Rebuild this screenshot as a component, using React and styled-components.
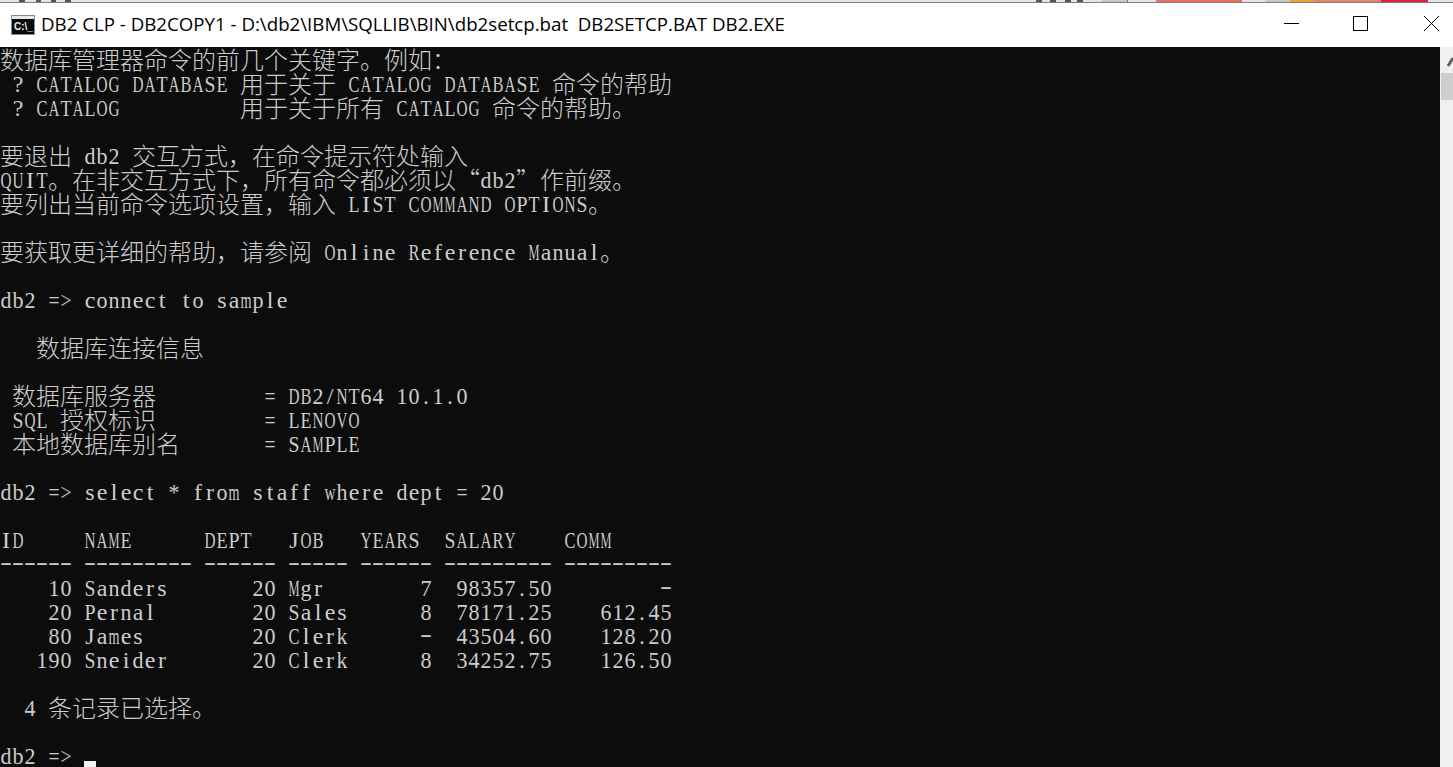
import React from 'react';
import styled, { createGlobalStyle } from 'styled-components';

const GlobalStyle = createGlobalStyle`
  html, body {
    margin: 0;
    padding: 0;
    height: 100%;
    overflow: hidden;
    background: #0c0c0c;
  }
`;

const Window = styled.div`
  display: flex;
  flex-direction: column;
  width: 1453px;
  height: 767px;
  overflow: hidden;
  background: #fff;
`;

const BehindStrip = styled.div`
  display: flex;
  height: 2px;
  background: #e4e4e4;
  border-bottom: 1px solid #808080;
`;

const BehindPiece = styled.div`
  width: ${(p) => p.$w}px;
  background: ${(p) => p.$c};
`;

const TitleBar = styled.div`
  display: flex;
  align-items: center;
  height: 44px;
  padding: 0 14px 0 11px;
  background: #fff;
`;

const TitleText = styled.div`
  flex: 1;
  margin-left: 6px;
  padding-bottom: 4px;
  font-family: 'Open Sans', 'Liberation Sans', sans-serif;
  font-size: 18.7px;
  color: #000;
  white-space: pre;
`;

const Controls = styled.div`
  display: flex;
  align-items: center;
  gap: 54px;
  padding-bottom: 3px;
`;

const ControlIcon = styled.svg`
  display: block;
  width: 15px;
  height: 15px;
  margin-left: ${(p) => (p.$close ? 2 : 0)}px;
`;

const Console = styled.div`
  display: flex;
  flex: 1;
  min-height: 0;
  background: #0c0c0c;
`;

const Screen = styled.div`
  flex: 1;
  overflow: hidden;
  color: #cccccc;
`;

const Row = styled.div`
  display: flex;
  height: 24px;
  line-height: 24px;
  white-space: pre;
`;

const Latin = styled.span`
  display: flex;
  font-family: 'Liberation Serif', serif;
  font-size: 24px;
  line-height: 26px;
`;

const Glyph = styled.span`
  display: flex;
  justify-content: center;
  width: 12px;
`;

const Cjk = styled.span`
  font-family: 'Noto Sans CJK SC', sans-serif;
  font-size: 24px;
  font-weight: 300;
`;

const Cursor = styled.span`
  align-self: flex-end;
  width: 12px;
  height: 6px;
  background: #f2f2f2;
`;

const ScrollTrack = styled.div`
  display: flex;
  flex-direction: column;
  width: 13px;
  background: #f0f0f0;
`;

const ArrowBox = styled.div`
  height: 26px;
  overflow: hidden;
`;

const Thumb = styled.div`
  height: 27px;
  margin-left: 1px;
  background: #cdcdcd;
`;

const splitRuns = (text) => text.split(/([\u3000-\u9fff\uff00-\uffef\u201c\u201d]+)/);

// the console font is fixed pitch, Liberation Serif is not: squeeze each letter into its 12px cell
const measure = document.createElement('canvas').getContext('2d');
measure.font = "24px 'Liberation Serif'";

const glyphTransform = (ch) => {
  if (ch === '-') return 'translateY(-2px) scaleX(1.5)';
  return `scaleX(${Math.min(1, 11 / measure.measureText(ch).width)})`;
};

const Line = ({ text = '', children }) => (
  <Row>
    {splitRuns(text).map((run, i) =>
      i % 2 ? (
        <Cjk key={i}>{run}</Cjk>
      ) : (
        <Latin key={i}>
          {[...run].map((ch, j) => (
            <Glyph key={j} style={{ transform: glyphTransform(ch) }}>
              {ch}
            </Glyph>
          ))}
        </Latin>
      )
    )}
    {children}
  </Row>
);

const staff = [
  [10, 'Sanders', 20, 'Mgr', 7, '98357.50', '-'],
  [20, 'Pernal', 20, 'Sales', 8, '78171.25', '612.45'],
  [80, 'James', 20, 'Clerk', '-', '43504.60', '128.20'],
  [190, 'Sneider', 20, 'Clerk', 8, '34252.75', '126.50'],
];

const staffRow = ([id, name, dept, job, years, salary, comm]) =>
  [
    String(id).padStart(6),
    name.padEnd(9),
    String(dept).padStart(6),
    job.padEnd(5),
    String(years).padStart(6),
    salary.padStart(9),
    comm.padStart(9),
  ].join(' ');

const beforeTable = [
  '数据库管理器命令的前几个关键字。例如\uff1a',
  ' ? CATALOG DATABASE 用于关于 CATALOG DATABASE 命令的帮助',
  ' ? CATALOG          用于关于所有 CATALOG 命令的帮助。',
  '',
  '要退出 db2 交互方式\uff0c在命令提示符处输入',
  'QUIT。在非交互方式下\uff0c所有命令都必须以“db2”作前缀。',
  '要列出当前命令选项设置\uff0c输入 LIST COMMAND OPTIONS。',
  '',
  '要获取更详细的帮助\uff0c请参阅 Online Reference Manual。',
  '',
  'db2 => connect to sample',
  '',
  '   数据库连接信息',
  '',
  ' 数据库服务器         = DB2/NT64 10.1.0',
  ' SQL 授权标识         = LENOVO',
  ' 本地数据库别名       = SAMPLE',
  '',
  'db2 => select * from staff where dept = 20',
  '',
  'ID     NAME      DEPT   JOB   YEARS  SALARY    COMM',
  '------ --------- ------ ----- ------ --------- ---------',
];

const afterTable = ['', '  4 条记录已选择。', ''];

const behind = [
  [20, '#e4e4e4'], [6, '#555'], [12, '#e4e4e4'], [5, '#555'], [10, '#e4e4e4'], [5, '#555'], [10, '#e4e4e4'], [6, '#555'],
  [1006, '#e4e4e4'], [6, '#555'], [8, '#e4e4e4'], [6, '#555'], [10, '#e4e4e4'], [6, '#555'], [6, '#e4e4e4'], [6, '#555'],
  [20, '#e4e4e4'], [26, '#c8c8c8'], [1, '#e05040'], [29, '#e4e4e4'], [90, '#e8705a'], [24, '#e4e4e4'], [26, '#c8c8c8'],
  [25, '#e8a030'], [70, '#e8806a'], [49, '#dc2048'], [26, '#e4e4e4'],
];

const App = () => (
  <Window>
    <GlobalStyle />
    <BehindStrip>
      {behind.map(([w, c], i) => (
        <BehindPiece key={i} $w={w} $c={c} />
      ))}
    </BehindStrip>
    <TitleBar>
      <svg width="24" height="20" viewBox="0 0 24 20">
        <rect x="0.5" y="0.5" width="23" height="19" fill="#fff" stroke="#8a8a8a" />
        <rect x="1" y="1" width="22" height="3" fill="#e8e8e8" />
        <rect x="1" y="4" width="22" height="15" fill="#0a0a0a" />
        <text x="3" y="15" fontFamily="Liberation Sans" fontSize="10" fontWeight="700" fill="#f0f0f0">
          C:\_
        </text>
      </svg>
      <TitleText>DB2 CLP - DB2COPY1 - D:\db2\IBM\SQLLIB\BIN\db2setcp.bat  DB2SETCP.BAT DB2.EXE</TitleText>
      <Controls>
        <ControlIcon viewBox="0 0 15 15">
          <path d="M0 7.5H15" stroke="#000" />
        </ControlIcon>
        <ControlIcon viewBox="0 0 15 15">
          <rect x="0.5" y="0.5" width="14" height="14" fill="none" stroke="#000" />
        </ControlIcon>
        <ControlIcon $close viewBox="0 0 15 15">
          <path d="M0 0L15 15M15 0L0 15" stroke="#000" />
        </ControlIcon>
      </Controls>
    </TitleBar>
    <Console>
      <Screen>
        {beforeTable.map((text, i) => (
          <Line key={i} text={text} />
        ))}
        {staff.map((row) => (
          <Line key={row[0]} text={staffRow(row)} />
        ))}
        {afterTable.map((text, i) => (
          <Line key={i} text={text} />
        ))}
        <Line text="db2 => ">
          <Cursor />
        </Line>
      </Screen>
      <ScrollTrack>
        <ArrowBox>
          <svg width="13" height="26" viewBox="0 0 13 26">
            <path d="M8 19L13 11" stroke="#606060" strokeWidth="3" fill="none" />
          </svg>
        </ArrowBox>
        <Thumb />
      </ScrollTrack>
    </Console>
  </Window>
);

export default App;
